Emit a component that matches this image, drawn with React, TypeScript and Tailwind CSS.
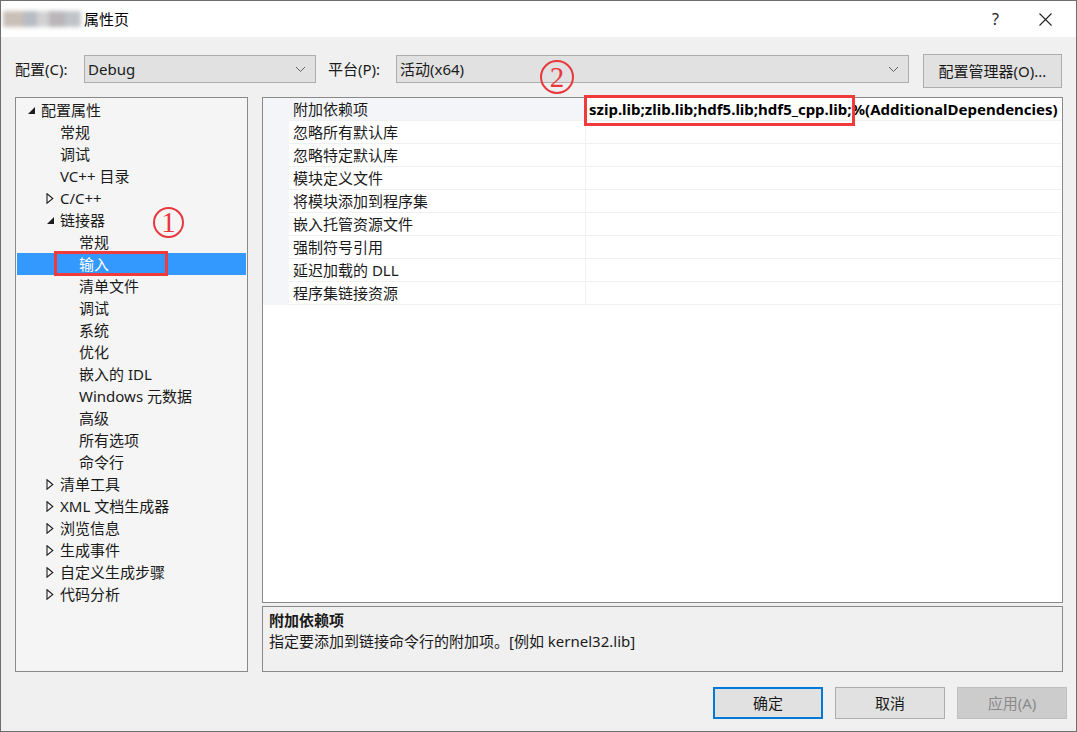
import React from "react";

const font = { fontFamily: '"Noto Sans", "Noto Sans CJK SC", sans-serif' };

type TreeItem = { label: string; level: number; arrow?: "open" | "closed"; selected?: boolean };

const tree: TreeItem[] = [
  { label: "配置属性", level: 0, arrow: "open" },
  { label: "常规", level: 1 },
  { label: "调试", level: 1 },
  { label: "VC++ 目录", level: 1 },
  { label: "C/C++", level: 1, arrow: "closed" },
  { label: "链接器", level: 1, arrow: "open" },
  { label: "常规", level: 2 },
  { label: "输入", level: 2, selected: true },
  { label: "清单文件", level: 2 },
  { label: "调试", level: 2 },
  { label: "系统", level: 2 },
  { label: "优化", level: 2 },
  { label: "嵌入的 IDL", level: 2 },
  { label: "Windows 元数据", level: 2 },
  { label: "高级", level: 2 },
  { label: "所有选项", level: 2 },
  { label: "命令行", level: 2 },
  { label: "清单工具", level: 1, arrow: "closed" },
  { label: "XML 文档生成器", level: 1, arrow: "closed" },
  { label: "浏览信息", level: 1, arrow: "closed" },
  { label: "生成事件", level: 1, arrow: "closed" },
  { label: "自定义生成步骤", level: 1, arrow: "closed" },
  { label: "代码分析", level: 1, arrow: "closed" },
];

const props = [
  "附加依赖项",
  "忽略所有默认库",
  "忽略特定默认库",
  "模块定义文件",
  "将模块添加到程序集",
  "嵌入托管资源文件",
  "强制符号引用",
  "延迟加载的 DLL",
  "程序集链接资源",
];

const Arrow = ({ kind }: { kind: "open" | "closed" }) =>
  kind === "open" ? (
    <svg width="9" height="9" viewBox="0 0 9 9">
      <path d="M8 1 L8 8 L1 8 Z" fill="#1e1e1e" />
    </svg>
  ) : (
    <svg width="8" height="11" viewBox="0 0 8 11">
      <path d="M1 0.8 L6.8 5.5 L1 10.2 Z" fill="none" stroke="#1e1e1e" strokeWidth="1.1" />
    </svg>
  );

const Chevron = () => (
  <svg width="11" height="7" viewBox="0 0 11 7">
    <path d="M1 1 L5.5 5.5 L10 1" fill="none" stroke="#606060" strokeWidth="1" />
  </svg>
);

const Circled = ({ n, size }: { n: string; size: string }) => (
  <div
    className={`${size} rounded-full border-2 border-[#e8383d] flex items-center justify-center text-[#e8383d] text-[29px] leading-none`}
    style={{ fontFamily: '"Liberation Serif", serif' }}
  >
    {n}
  </div>
);

export default function App() {
  return (
    <div
      className="relative w-[1077px] h-[732px] bg-[#f0f0f0] border border-[#6e6e6e] flex flex-col text-[15px] text-[#1a1a1a] overflow-hidden"
      style={font}
    >
      {/* title bar */}
      <div className="h-[36px] bg-white flex items-center shrink-0">
        <div className="ml-[2px] flex h-[16px] w-[78px] blur-[2px]">
          <div className="w-[20px] bg-[#c8bfb8]" />
          <div className="w-[14px] bg-[#b7bcc2]" />
          <div className="w-[12px] bg-[#d2d2d2]" />
          <div className="w-[16px] bg-[#b9b5b8]" />
          <div className="w-[16px] bg-[#c0c4c8]" />
        </div>
        <span className="ml-[3px] text-[15px] text-black">属性页</span>
        <span className="ml-auto mr-[40px] text-[16px] text-[#222]">?</span>
        <svg width="13" height="13" viewBox="0 0 13 13" className="mr-[24px]">
          <path d="M0.5 0.5 L12.5 12.5 M12.5 0.5 L0.5 12.5" stroke="#222" strokeWidth="1.1" />
        </svg>
      </div>

      {/* config row */}
      <div className="flex items-start h-[34px] mt-[17px] pl-[14px] shrink-0">
        <span className="mt-[4px] w-[69px]">配置(C):</span>
        <div className="mt-[1px] w-[232px] h-[28px] bg-[#e1e1e1] border border-[#adadad] flex items-center pl-[3px] pr-[9px]">
          <span className="flex-1">Debug</span>
          <Chevron />
        </div>
        <span className="mt-[4px] ml-[12px] w-[68px]">平台(P):</span>
        <div className="mt-[1px] w-[513px] h-[28px] bg-[#e1e1e1] border border-[#adadad] flex items-center pl-[3px] pr-[9px]">
          <span className="flex-1">活动(x64)</span>
          <Chevron />
        </div>
        <div className="ml-[14px] w-[139px] h-[34px] bg-[#e1e1e1] border border-[#adadad] flex items-center justify-center">
          配置管理器(O)...
        </div>
      </div>

      {/* panels */}
      <div className="flex mt-[9px] pl-[14px] h-[575px] shrink-0">
        {/* tree */}
        <div className="relative w-[233px] h-full bg-[#f5f5f5] border border-[#8a8a8a] pt-[1px] px-[1px]">
          {tree.map((t, i) => (
            <div
              key={i}
              className={`h-[22px] flex items-center ${t.selected ? "bg-[#3399ff] text-white" : ""}`}
            >
              <div
                className={`flex items-center justify-center w-[12px] ${
                  t.level === 0 ? "ml-[8px]" : t.level === 1 ? "ml-[27px]" : "ml-[46px]"
                }`}
              >
                {t.arrow && <Arrow kind={t.arrow} />}
              </div>
              <span className="ml-[4px]">{t.label}</span>
            </div>
          ))}
          {/* annotation 1 */}
          <div className="absolute left-[38px] top-[153px] w-[114px] h-[25px] border-[3px] border-[#ef3b3b]" />
          <div className="absolute left-[137px] top-[109px]">
            <Circled n="1" size="w-[31px] h-[31px]" />
          </div>
        </div>

        {/* right side */}
        <div className="ml-[14px] w-[801px] h-full flex flex-col">
          <div className="h-[506px] bg-white border border-[#8a8a8a] flex flex-col overflow-hidden">
            {props.map((p, i) => (
              <div key={i} className="h-[23px] flex shrink-0">
                <div className="w-[26px] bg-[#f3f5f8]" />
                <div
                  className={`w-[297px] flex items-center pl-[4px] border-b border-r border-[#eef0f4] ${
                    i === 0 ? "bg-[#f3f5f8]" : ""
                  }`}
                >
                  {p}
                </div>
                <div className="flex-1 flex items-center pl-[3px] border-b border-[#eef0f4] whitespace-nowrap overflow-hidden">
                  {i === 0 && (
                    <span className="font-bold text-[15px] text-black">
                      szip.lib;zlib.lib;hdf5.lib;hdf5_cpp.lib;%(AdditionalDependencies)
                    </span>
                  )}
                </div>
              </div>
            ))}
          </div>
          <div className="mt-[3px] flex-1 bg-[#f0f0f0] border border-[#8a8a8a] px-[6px] pt-[3px] leading-[21px]">
            <div className="font-bold">附加依赖项</div>
            <div>指定要添加到链接命令行的附加项。[例如 kernel32.lib]</div>
          </div>
        </div>
      </div>

      {/* buttons */}
      <div className="flex justify-end gap-[12px] mt-[15px] pr-[9px]">
        <div className="w-[110px] h-[32px] bg-[#e1e1e1] border-2 border-[#0078d7] flex items-center justify-center">
          确定
        </div>
        <div className="w-[110px] h-[32px] bg-[#e1e1e1] border border-[#adadad] flex items-center justify-center">
          取消
        </div>
        <div className="w-[110px] h-[32px] bg-[#cccccc] border border-[#bfbfbf] flex items-center justify-center text-[#8a8a8a]">
          应用(A)
        </div>
      </div>

      {/* annotation 2 */}
      <div className="absolute left-[583px] top-[94px] w-[271px] h-[31px] border-[3px] border-[#ef3b3b]" />
      <div className="absolute left-[539px] top-[59px]">
        <Circled n="2" size="w-[34px] h-[34px]" />
      </div>
    </div>
  );
}
